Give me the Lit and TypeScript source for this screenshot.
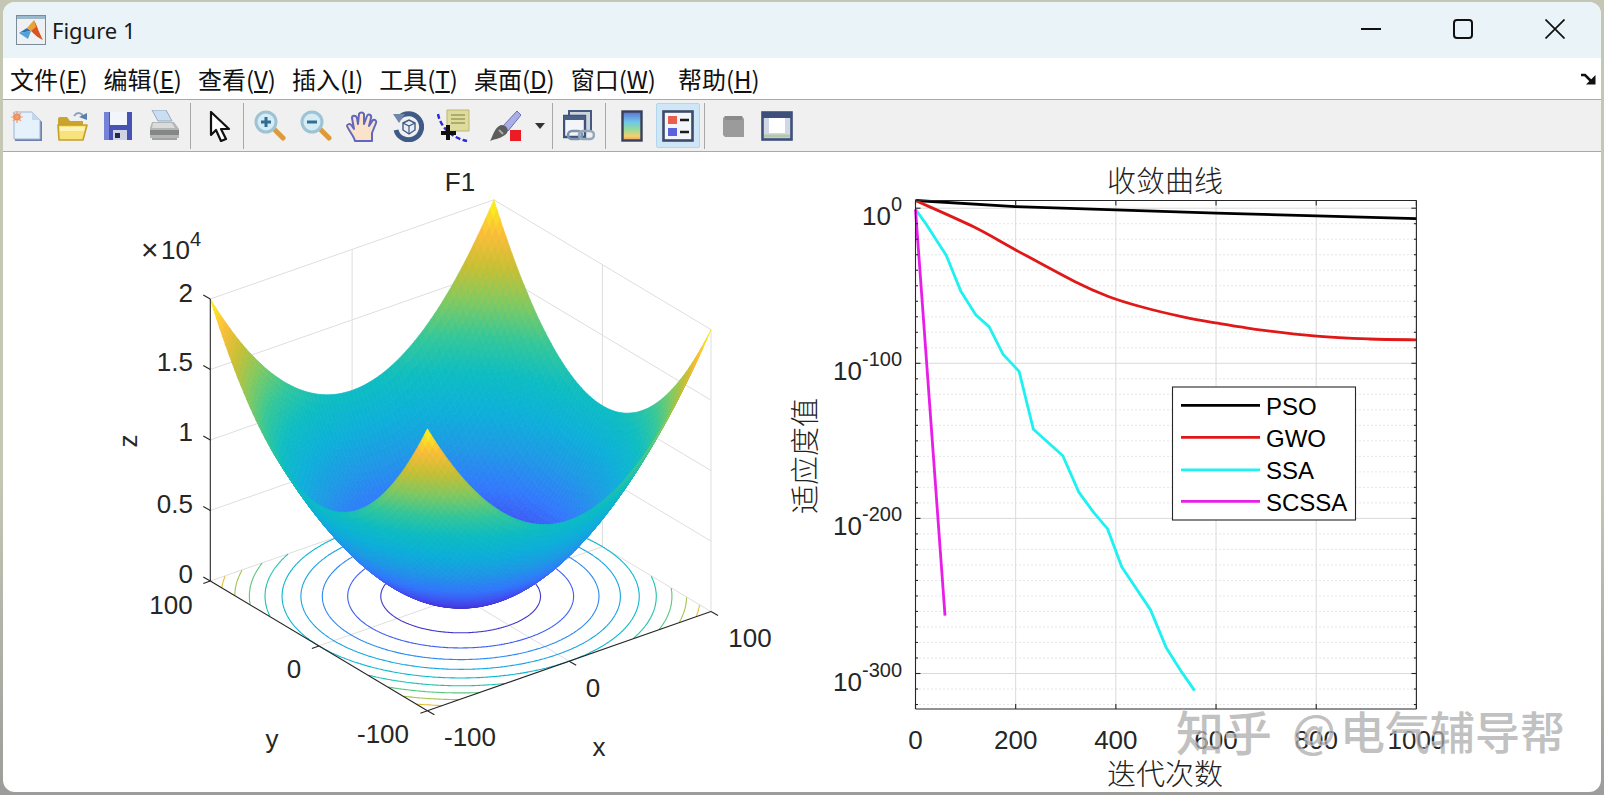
import { LitElement, css, html, svg } from "lit";
import { customElement } from "lit/decorators.js";

// parula colormap stops
const STOPS = [
  [0, 0.2422, 0.1504, 0.6603],
  [0.1, 0.27, 0.27, 0.93],
  [0.2, 0.2, 0.47, 0.99],
  [0.3, 0.12, 0.6, 0.9],
  [0.4, 0.05, 0.69, 0.85],
  [0.5, 0.05, 0.74, 0.76],
  [0.6, 0.2, 0.78, 0.6],
  [0.7, 0.5, 0.79, 0.38],
  [0.8, 0.78, 0.75, 0.2],
  [0.9, 0.99, 0.74, 0.22],
  [1, 0.9769, 0.9839, 0.0805],
];

function parula(t: number) {
  t = Math.max(0, Math.min(1, t));
  let i = 0;
  while (i < STOPS.length - 2 && t > STOPS[i + 1][0]) i++;
  const a = STOPS[i];
  const b = STOPS[i + 1];
  const f = (t - a[0]) / (b[0] - a[0]);
  const c = [1, 2, 3].map((k) => Math.round((a[k] + (b[k] - a[k]) * f) * 255));
  return `rgb(${c[0]},${c[1]},${c[2]})`;
}

// orthographic view of the surf axes, page pixels
function proj(x: number, y: number, z: number) {
  return [460.65 + 1.418 * x - 1.0855 * y, 596.3 - 0.496 * x - 0.649 * y - 0.0141 * z];
}
const pt = (x: number, y: number, z: number) => proj(x, y, z).map((v) => v.toFixed(1)).join(",");

// back to front so the painter order hides the far side
function surfaceCells() {
  const n = 72;
  const step = 200 / n;
  const cells: { d: string; c: string }[] = [];
  for (let i = n - 1; i >= 0; i--) {
    const x0 = -100 + i * step;
    const x1 = x0 + step;
    for (let j = n - 1; j >= 0; j--) {
      const y0 = -100 + j * step;
      const y1 = y0 + step;
      const f = (x: number, y: number) => x * x + y * y;
      const d = [pt(x0, y0, f(x0, y0)), pt(x1, y0, f(x1, y0)), pt(x1, y1, f(x1, y1)), pt(x0, y1, f(x0, y1))].join(" ");
      const xm = (x0 + x1) / 2;
      const ym = (y0 + y1) / 2;
      cells.push({ d, c: parula(f(xm, ym) / 20000) });
    }
  }
  return cells;
}

function contours() {
  const out: { d: string; c: string }[] = [];
  for (let k = 1; k <= 9; k++) {
    const r = Math.sqrt(2000 * k);
    let d = "";
    let pen = false;
    for (let a = 0; a <= 720; a++) {
      const t = (a / 720) * Math.PI * 2;
      const x = r * Math.cos(t);
      const y = r * Math.sin(t);
      if (Math.abs(x) > 100 || Math.abs(y) > 100) {
        pen = false;
        continue;
      }
      d += (pen ? "L" : "M") + pt(x, y, 0);
      pen = true;
    }
    out.push({ d, c: parula((2000 * k) / 20000 - 0.05) });
  }
  return out;
}

const CELLS = surfaceCells();
const RINGS = contours();

function line3(a: number[], b: number[]) {
  const p = proj(a[0], a[1], a[2]);
  const q = proj(b[0], b[1], b[2]);
  return svg`<line x1=${p[0]} y1=${p[1]} x2=${q[0]} y2=${q[1]}></line>`;
}

const sx = (zx: number) => 780 + zx / 2.376;
const sy = (zy: number) => 160 + zy / 2.469;
const poly = (pts: number[][]) => pts.map((p) => `${sx(p[0]).toFixed(1)},${sy(p[1]).toFixed(1)}`).join(" ");

// catmull-rom, the GWO curve has no visible corners
function smooth(pts: number[][]) {
  const p = pts.map((q) => [sx(q[0]), sy(q[1])]);
  let d = `M${p[0][0].toFixed(1)} ${p[0][1].toFixed(1)}`;
  for (let i = 0; i < p.length - 1; i++) {
    const a = p[Math.max(i - 1, 0)];
    const b = p[i];
    const c = p[i + 1];
    const e = p[Math.min(i + 2, p.length - 1)];
    const c1 = [b[0] + (c[0] - a[0]) / 6, b[1] + (c[1] - a[1]) / 6];
    const c2 = [c[0] - (e[0] - b[0]) / 6, c[1] - (e[1] - b[1]) / 6];
    d += `C${c1[0].toFixed(1)} ${c1[1].toFixed(1)} ${c2[0].toFixed(1)} ${c2[1].toFixed(1)} ${c[0].toFixed(1)} ${c[1].toFixed(1)}`;
  }
  return d;
}

const PSO = [[322, 100], [559, 115], [797, 123], [1037, 131], [1275, 138], [1512, 145]];
const GWO = [[322, 100], [460, 165], [560, 222], [700, 300], [780, 337], [860, 363], [960, 388], [1040, 403], [1130, 418], [1275, 435], [1400, 442], [1512, 444]];
const SSA = [[322, 122], [345, 155], [395, 235], [430, 325], [465, 382], [497, 412], [530, 480], [568, 522], [602, 665], [672, 730], [710, 820], [745, 870], [778, 910], [812, 1005], [880, 1110], [918, 1205], [955, 1265], [985, 1310]];
const SCSSA = [[322, 122], [392, 1125]];

const AX = { l: 915.5, r: 1416.4, t: 200.5, b: 709 };
const xt = (v: number) => AX.l + (v / 1000) * (AX.r - AX.l);
const yt = (d: number) => 208.2 + (d / 100) * 155.1;

const icons = {
  newDoc: svg`<svg class="ico" viewBox="0 0 32 32" width="32" height="32">
    <path d="M5 3H23L32 12V31H5Z" fill="#6f80ab"/>
    <path d="M4 2H22L30 10V29H4Z" fill="#e6f2fb" stroke="#9fb4d4"/>
    <path d="M22 2V10H30Z" fill="#c5d7ea"/>
    <circle cx="7" cy="7" r="3.6" fill="#e8703a"/>
    <path d="M7 1V13M1 7H13M3 3L11 11M11 3L3 11" stroke="#f0a070" stroke-width="1.2"/></svg>`,
  open: svg`<svg class="ico" viewBox="0 0 32 32" width="32" height="32">
    <path d="M18 6C21 2 26 2 27 7" fill="none" stroke="#8aa0b8" stroke-width="2"/><path d="M23 7L31 3V10Z" fill="#5d7ea8"/>
    <path d="M2 9Q2 7 4 7H11L14 11H27V27H2Z" fill="#c9a52e"/>
    <path d="M2 15H31L27 30H3Z" fill="#f8e27a" stroke="#c39f2c" stroke-width="1.6" stroke-linejoin="round"/>
    <path d="M4 17H29L28 21H4Z" fill="#fdf3b8"/></svg>`,
  save: svg`<svg class="ico" viewBox="0 0 32 32" width="32" height="32">
    <path d="M2 2H30V30H2Z" fill="#4753b4"/>
    <path d="M2 2H7V30H2Z" fill="#7482d8"/>
    <path d="M8 2H25V15H8Z" fill="#f3f5fc"/>
    <path d="M11 20H25V30H11Z" fill="#cfd3e6"/><path d="M13 23H18V28H13Z" fill="#23274a"/></svg>`,
  print: svg`<svg class="ico" viewBox="0 0 32 32" width="32" height="32">
    <path d="M4 0H18L24 11H10Z" fill="#c9def0" stroke="#94a9be"/>
    <path d="M4 12H26L31 19V28H2V18Z" fill="#b4b6b6"/>
    <path d="M2 20H31V25H2Z" fill="#858787"/>
    <path d="M5 13H24L27 18H4Z" fill="#dadbdb"/><path d="M4 28H29V30H4Z" fill="#a2a2a2"/></svg>`,
  pointer: svg`<svg class="ico ptr" viewBox="0 0 32 32" width="32" height="32">
    <path d="M8 2V25L13 20L18 31L23 29L18 19H26Z" fill="#fff" stroke="#111" stroke-width="2.2" stroke-linejoin="round"/></svg>`,
  zoomIn: svg`<svg class="ico" viewBox="0 0 32 32" width="32" height="32">
    <path d="M20 19L29 28" stroke="#dc9a3c" stroke-width="5" stroke-linecap="round"/>
    <circle cx="12" cy="12" r="10" fill="#d5ecf5" stroke="#9dc3d4" stroke-width="3"/>
    <path d="M12 7V17M7 12H17" stroke="#2f6f93" stroke-width="3"/></svg>`,
  zoomOut: svg`<svg class="ico" viewBox="0 0 32 32" width="32" height="32">
    <path d="M20 19L29 28" stroke="#dc9a3c" stroke-width="5" stroke-linecap="round"/>
    <circle cx="12" cy="12" r="10" fill="#d5ecf5" stroke="#9dc3d4" stroke-width="3"/>
    <path d="M7 12H17" stroke="#2f6f93" stroke-width="3"/></svg>`,
  hand: svg`<svg class="ico" viewBox="0 0 32 32" width="32" height="32">
    <path d="M9 31C8 26 3 21 1 16C1 14 4 13 6 16L8 19L6 8C6 5 10 5 11 8L12 14L13 4C14 2 17 2 18 4L18 14L21 6C22 3 26 5 25 8L23 16L27 10C29 9 31 11 30 13L26 23V31Z" fill="#fbe3cb" stroke="#6067bd" stroke-width="2" stroke-linejoin="round"/></svg>`,
  rotate: svg`<svg class="ico" viewBox="0 0 32 32" width="32" height="32">
    <path d="M7 8A13 13 0 1 1 4 20" fill="none" stroke="#3f5a86" stroke-width="5"/>
    <path d="M1 4H13L7 13Z" fill="#6f87a8"/>
    <path d="M11 13L17 10L23 13V20L17 24L11 20Z" fill="#e9eef3" stroke="#3f5a86" stroke-width="1.4"/>
    <path d="M11 13L17 16L23 13M17 16V24" fill="none" stroke="#3f5a86" stroke-width="1.2"/></svg>`,
  cursor: svg`<svg class="ico" viewBox="0 0 34 34" width="34" height="34">
    <path d="M10 1H32V22H10Z" fill="#dedb9e" stroke="#bdb96e"/>
    <path d="M14 6H28M14 10H28M14 14H28" stroke="#a09c5a" stroke-width="1.5"/>
    <path d="M1 5C3 16 12 28 30 32" fill="none" stroke="#2a28d8" stroke-width="2.4" stroke-dasharray="5 2.5"/>
    <path d="M11 16V31M4 24H19" stroke="#111" stroke-width="4"/></svg>`,
  brush: svg`<svg class="ico" viewBox="0 0 32 32" width="32" height="32">
    <path d="M14 16L28 1L32 5L19 21Z" fill="#a9aee6" stroke="#6b70b0"/>
    <path d="M12 15C18 15 20 20 18 23C14 28 6 29 1 31C4 26 5 18 12 15Z" fill="#5d5d5d"/>
    <path d="M10 20L14 24" stroke="#aaa" stroke-width="2"/>
    <path d="M21 20H32V31H21Z" fill="#ec1c24"/></svg>`,
  link: svg`<svg class="ico" viewBox="0 0 32 32" width="32" height="32">
    <path d="M6 1H28V21H6Z" fill="#cdd4de" stroke="#465a7f" stroke-width="2"/>
    <path d="M1 6H22V27H1Z" fill="#f3f5f8" stroke="#3e5378" stroke-width="2.4"/>
    <path d="M1 6H22V10H1Z" fill="#4a5f85"/>
    <rect x="5" y="21" width="14" height="8" rx="4" fill="none" stroke="#7d93ad" stroke-width="2.6"/>
    <rect x="16" y="21" width="15" height="8" rx="4" fill="none" stroke="#93a7bd" stroke-width="2.6"/></svg>`,
  colorbar: svg`<svg class="ico" viewBox="0 0 22 32" width="22" height="32">
    <defs><linearGradient id="cb" x1="0" y1="0" x2="0" y2="1">
      <stop offset="0" stop-color="#5c6fd0"/><stop offset=".35" stop-color="#6fc4ea"/><stop offset=".6" stop-color="#90dca0"/><stop offset=".85" stop-color="#f5cf6e"/><stop offset="1" stop-color="#e8a060"/></linearGradient></defs>
    <rect x="1.5" y="1.5" width="19" height="29" fill="url(#cb)" stroke="#3a3f58" stroke-width="2.4"/></svg>`,
  legend: svg`<svg class="ico" viewBox="0 0 32 32" width="32" height="32">
    <rect x="1.5" y="1.5" width="29" height="29" fill="#f2f5fa" stroke="#3d4a68" stroke-width="2.6"/>
    <rect x="6" y="6" width="9" height="8" fill="#e8604c"/><rect x="6" y="18" width="9" height="8" fill="#5a62dc"/>
    <path d="M18 10H27M18 22H27" stroke="#1a1a1a" stroke-width="2.4"/></svg>`,
  square: svg`<svg class="ico sq" viewBox="0 0 22 22" width="22" height="22">
    <path d="M3 1H20L22 4V22H3L1 20V3Z" fill="#9b9b9b"/><path d="M3 1H20V5H3Z" fill="#8a8a8a"/></svg>`,
  tools: svg`<svg class="ico" viewBox="0 0 32 30" width="32" height="30">
    <rect x="1.5" y="1.5" width="29" height="27" fill="#cfd8e4" stroke="#3d4f7a" stroke-width="2.6"/>
    <path d="M1 1H31V7H1Z" fill="#3d4f7a"/>
    <rect x="8" y="7" width="16" height="15" fill="#fff"/>
    <path d="M3 25H29" stroke="#b6c8a8" stroke-width="3"/></svg>`,
  matlab: svg`<svg viewBox="0 0 30 30" width="30" height="30">
    <rect x=".5" y=".5" width="29" height="29" fill="#eef1f3" stroke="#7b8c99"/>
    <rect x="1" y="1" width="28" height="3" fill="#9cb9cc"/>
    <path d="M3 18L11 13L15 16Z" fill="#2f6fb0"/>
    <path d="M11 13L18 5L22 14L15 16Z" fill="#e8a23a"/>
    <path d="M18 5C21 11 24 20 27 25C22 23 19 20 15 16L20 12Z" fill="#d9531e"/>
    <path d="M3 18L15 16L12 24Z" fill="#4fa3d8"/></svg>`,
};

const MENUS: [string, string][] = [
  ["文件", "F"], ["编辑", "E"], ["查看", "V"], ["插入", "I"],
  ["工具", "T"], ["桌面", "D"], ["窗口", "W"], ["帮助", "H"],
];

@customElement("app-root")
export class AppRoot extends LitElement {
  static styles = css`
    :host {
      display: block;
      width: 1604px;
      height: 795px;
      overflow: hidden;
      background: linear-gradient(#c5c7b5 0, #c5c7b5 60%, #9c9c9a 100%);
      font-family: "Noto Sans", sans-serif;
    }
    .win {
      margin: 2px 3px 0 3px;
      height: 790px;
      border-radius: 12px;
      background: #fff;
      display: flex;
      flex-direction: column;
    }
    .titlebar {
      height: 56px;
      flex: none;
      background: #e9f3f8;
      border-radius: 12px 12px 0 0;
      display: flex;
      align-items: center;
      padding-left: 13px;
    }
    .titlebar .name {
      margin-left: 6px;
      font-size: 22px;
      color: #1a1a1a;
    }
    .winbtns {
      margin-left: auto;
      display: flex;
      align-items: center;
      padding-right: 36px;
      gap: 72px;
      margin-top: -2px;
    }
    .menubar {
      height: 41px;
      flex: none;
      display: flex;
      align-items: center;
      gap: 16px;
      padding-left: 7px;
      border-bottom: 1px solid #a9a9a9;
      font-family: "Noto Sans CJK SC", "Liberation Sans", sans-serif;
      font-size: 24px;
      color: #111;
    }
    .menubar span:nth-child(8) {
      margin-left: 6px;
    }
    .menubar .flip {
      margin-left: auto;
      margin-right: 5px;
      display: flex;
    }
    .toolbar {
      height: 51px;
      flex: none;
      background: #f0f0f0;
      border-bottom: 1px solid #a9a9a9;
      display: flex;
      align-items: center;
    }
    .btn {
      width: 44px;
      height: 45px;
      margin: 0 1px;
      display: flex;
      align-items: center;
      justify-content: center;
      box-sizing: border-box;
    }
    .btn.on {
      background: #cfe6f7;
      border: 1px solid #b2d6ee;
      border-radius: 2px;
    }
    .btn.wide {
      width: 70px;
      justify-content: flex-start;
      padding-left: 11px;
    }
    .caret {
      margin-left: 14px;
      width: 0;
      height: 0;
      border-left: 5px solid transparent;
      border-right: 5px solid transparent;
      border-top: 6px solid #333;
    }
    .sep {
      width: 1px;
      height: 46px;
      background: #a8a8a8;
      margin: 0 3px;
    }
    .ico {
      filter: blur(0.45px);
    }
    .ptr {
      margin-left: 4px;
    }
    .sq {
      margin-left: 3px;
    }
    .fig {
      flex: 1;
      display: block;
      width: 1598px;
      height: 640px;
      overflow: visible;
    }
    .grid line {
      stroke: #dedede;
      stroke-width: 1;
    }
    .axis line {
      stroke: #262626;
      stroke-width: 1.1;
    }
    .t {
      font-family: "Liberation Sans", Arial, sans-serif;
      font-size: 26px;
      fill: #262626;
    }
    .leg {
      font-family: "Liberation Sans", Arial, sans-serif;
      font-size: 24px;
      fill: #000;
    }
    .cjk {
      font-family: "Noto Sans CJK SC", sans-serif;
      font-weight: 300;
      font-size: 29px;
      fill: #222;
    }
    .wm {
      font-family: "Noto Sans CJK SC", sans-serif;
      font-weight: 500;
      font-size: 45px;
      fill: rgba(170, 170, 170, 0.72);
      stroke: rgba(255, 255, 255, 0.55);
      stroke-width: 1.5px;
      paint-order: stroke;
    }
    .wm.big {
      font-size: 48px;
    }
    .minor {
      stroke: #cdcdcd;
      stroke-width: 1;
      stroke-dasharray: 1 3;
    }
    .major {
      stroke: #dadada;
      stroke-width: 1;
    }
    .curve {
      fill: none;
      stroke-width: 2.8;
      stroke-linejoin: round;
    }
  `;

  renderSurf() {
    const Z = [0, 5000, 10000, 15000, 20000];
    const tick = (p: number[], dx: number, dy: number) => {
      const q = proj(p[0], p[1], p[2]);
      return svg`<line x1=${q[0]} y1=${q[1]} x2=${q[0] + dx} y2=${q[1] + dy}></line>`;
    };
    return svg`
      <g class="grid">
        ${Z.map((z) => line3([-100, 100, z], [100, 100, z]))}
        ${Z.map((z) => line3([100, 100, z], [100, -100, z]))}
        ${line3([0, 100, 0], [0, 100, 20000])}
        ${line3([100, 100, 0], [100, 100, 20000])}
        ${line3([100, 0, 0], [100, 0, 20000])}
        ${line3([100, -100, 0], [100, -100, 20000])}
        ${line3([0, -100, 0], [0, 100, 0])}
        ${line3([-100, 0, 0], [100, 0, 0])}
      </g>
      <g fill="none" stroke-width="1.1">${RINGS.map((r) => svg`<path d=${r.d} stroke=${r.c}></path>`)}</g>
      <g stroke-width="0.7" stroke-linejoin="round">
        ${CELLS.map((c) => svg`<polygon points=${c.d} fill=${c.c} stroke=${c.c}></polygon>`)}
      </g>
      <g class="axis">
        ${line3([-100, 100, 0], [-100, 100, 20000])}
        ${line3([-100, 100, 0], [-100, -100, 0])}
        ${line3([-100, -100, 0], [100, -100, 0])}
        ${Z.map((z) => tick([-100, 100, z], -7, -4))}
        ${[-100, 0, 100].map((x) => tick([x, -100, 0], 7, 4))}
        ${[-100, 0, 100].map((y) => tick([-100, y, 0], -7, 2.5))}
      </g>
      <text class="t" x="460" y="191" text-anchor="middle">F1</text>
      <text class="t" x="141" y="260" fill="#555" style="font-size:30px">×</text>
      <text class="t" x="161" y="259">10<tspan dy="-13" style="font-size:20px">4</tspan></text>
      <text class="t" x="193" y="302" text-anchor="end">2</text>
      <text class="t" x="193" y="371" text-anchor="end">1.5</text>
      <text class="t" x="193" y="441" text-anchor="end">1</text>
      <text class="t" x="193" y="513" text-anchor="end">0.5</text>
      <text class="t" x="193" y="583" text-anchor="end">0</text>
      <text class="t" transform="translate(137 441) rotate(-90)" text-anchor="middle">z</text>
      <text class="t" x="171" y="614" text-anchor="middle">100</text>
      <text class="t" x="294" y="678" text-anchor="middle">0</text>
      <text class="t" x="383" y="743" text-anchor="middle">-100</text>
      <text class="t" x="272" y="748" text-anchor="middle">y</text>
      <text class="t" x="470" y="746" text-anchor="middle">-100</text>
      <text class="t" x="593" y="697" text-anchor="middle">0</text>
      <text class="t" x="750" y="647" text-anchor="middle">100</text>
      <text class="t" x="599" y="756" text-anchor="middle">x</text>
    `;
  }

  renderConv() {
    const { l, r, t, b } = AX;
    const xs = [0, 200, 400, 600, 800, 1000];
    const majors = [0, -100, -200, -300].map((d) => yt(-d));
    const minors: number[] = [];
    for (let k = 0; k <= 32; k++) {
      if (k % 10 !== 0) minors.push(yt(k * 10));
    }
    const ylabel = (e: string, y: number) =>
      svg`<text class="t" x="902" y=${y + 17} text-anchor="end">10<tspan dy="-14" style="font-size:20px">${e}</tspan></text>`;
    const legend: [string, string, number][] = [
      ["PSO", "#000", 405.4],
      ["GWO", "#e01818", 437.4],
      ["SSA", "#1ff0f0", 469.8],
      ["SCSSA", "#e81ee8", 501.4],
    ];
    return svg`
      ${minors.map((y) => svg`<line class="minor" x1=${l} x2=${r} y1=${y} y2=${y}></line>`)}
      ${majors.map((y) => svg`<line class="major" x1=${l} x2=${r} y1=${y} y2=${y}></line>`)}
      ${xs.map((v) => svg`<line class="major" x1=${xt(v)} x2=${xt(v)} y1=${t} y2=${b}></line>`)}
      <polyline class="curve" stroke="#000" points=${poly(PSO)}></polyline>
      <path class="curve" stroke="#e01818" d=${smooth(GWO)}></path>
      <polyline class="curve" stroke="#1ff0f0" points=${poly(SSA)}></polyline>
      <polyline class="curve" stroke="#e81ee8" points=${poly(SCSSA)}></polyline>
      <g class="axis">
        <line x1=${l} x2=${r} y1=${t} y2=${t}></line>
        <line x1=${l} x2=${r} y1=${b} y2=${b}></line>
        <line x1=${l} x2=${l} y1=${t} y2=${b}></line>
        <line x1=${r} x2=${r} y1=${t} y2=${b}></line>
        ${xs.map((v) => svg`<line x1=${xt(v)} x2=${xt(v)} y1=${b} y2=${b - 5}></line><line x1=${xt(v)} x2=${xt(v)} y1=${t} y2=${t + 5}></line>`)}
        ${majors.map((y) => svg`<line x1=${l} x2=${l + 5} y1=${y} y2=${y}></line><line x1=${r} x2=${r - 5} y1=${y} y2=${y}></line>`)}
        ${minors.map((y) => svg`<line x1=${l} x2=${l + 2.5} y1=${y} y2=${y}></line><line x1=${r} x2=${r - 2.5} y1=${y} y2=${y}></line>`)}
      </g>
      ${ylabel("0", yt(0))}
      ${ylabel("-100", yt(100))}
      ${ylabel("-200", yt(200))}
      ${ylabel("-300", yt(300))}
      ${xs.map((v) => svg`<text class="t" x=${xt(v)} y="749" text-anchor="middle">${v}</text>`)}
      <text class="cjk" x="1165" y="192" text-anchor="middle">收敛曲线</text>
      <text class="cjk" x="1165" y="785" text-anchor="middle">迭代次数</text>
      <text class="cjk" transform="translate(816 456) rotate(-90)" text-anchor="middle">适应度值</text>
      <rect x="1172.5" y="387" width="183" height="133" fill="#fff" stroke="#262626" stroke-width="1.1"></rect>
      ${legend.map(
        ([name, c, y]) => svg`
          <line x1="1181" x2="1260" y1=${y} y2=${y} stroke=${c} stroke-width="2.8"></line>
          <text class="leg" x="1266" y=${y + 9.5}>${name}</text>`
      )}
      <text class="wm big" x="1176" y="751">知乎</text>
      <text class="wm" x="1292" y="748">@</text>
      <text class="wm" x="1340" y="750">电气辅导帮</text>
    `;
  }

  render() {
    return html`
      <div class="win">
        <div class="titlebar">
          ${icons.matlab}
          <span class="name">Figure 1</span>
          <div class="winbtns">
            <svg width="20" height="20" viewBox="0 0 20 20"><path d="M0 10H20" stroke="#111" stroke-width="2"></path></svg>
            <svg width="20" height="20" viewBox="0 0 20 20"><rect x="1" y="1" width="18" height="18" rx="3" fill="none" stroke="#111" stroke-width="2"></rect></svg>
            <svg width="20" height="20" viewBox="0 0 20 20"><path d="M0.5 0.5L19.5 19.5M19.5 0.5L0.5 19.5" stroke="#111" stroke-width="1.7"></path></svg>
          </div>
        </div>
        <div class="menubar">
          ${MENUS.map(([n, k]) => html`<span>${n}(<u>${k}</u>)</span>`)}
          <span class="flip">
            <svg width="16" height="12" viewBox="0 0 16 12"><path d="M1 2H5L11 8" fill="none" stroke="#111" stroke-width="2.6"></path><path d="M6 11.5H15.5V2Z" fill="#111"></path></svg>
          </span>
        </div>
        <div class="toolbar">
          <div class="btn">${icons.newDoc}</div>
          <div class="btn">${icons.open}</div>
          <div class="btn">${icons.save}</div>
          <div class="btn">${icons.print}</div>
          <div class="sep"></div>
          <div class="btn">${icons.pointer}</div>
          <div class="sep"></div>
          <div class="btn">${icons.zoomIn}</div>
          <div class="btn">${icons.zoomOut}</div>
          <div class="btn">${icons.hand}</div>
          <div class="btn">${icons.rotate}</div>
          <div class="btn">${icons.cursor}</div>
          <div class="btn wide">${icons.brush}<span class="caret"></span></div>
          <div class="sep"></div>
          <div class="btn">${icons.link}</div>
          <div class="sep"></div>
          <div class="btn">${icons.colorbar}</div>
          <div class="btn on">${icons.legend}</div>
          <div class="sep"></div>
          <div class="btn">${icons.square}</div>
          <div class="btn">${icons.tools}</div>
        </div>
        <svg class="fig" viewBox="3 152 1598 640">
          ${this.renderSurf()}
          ${this.renderConv()}
        </svg>
      </div>
    `;
  }
}
